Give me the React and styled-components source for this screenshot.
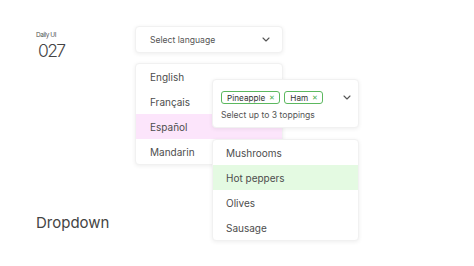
import React from "react";
import styled, { createGlobalStyle } from "styled-components";

const Global = createGlobalStyle`
  html, body { margin: 0; padding: 0; background: #ffffff; }
  body { font-family: Inter, "Noto Sans", sans-serif; -webkit-font-smoothing: antialiased; }
`;

const Page = styled.div`
  width: 474px;
  height: 266px;
  display: grid;
  grid-template-columns: 135px 1fr;
  background: #fff;
  overflow: hidden;
`;

const Aside = styled.div`
  display: flex;
  flex-direction: column;
  justify-content: space-between;
  padding: 31px 0 34px 36px;
  color: #444;
`;

const Brand = styled.div`
  display: flex;
  flex-direction: column;
  gap: 2px;
`;

const BrandSmall = styled.span`
  font-size: 6.5px;
  letter-spacing: -0.45px;
  line-height: 8px;
  color: #555;
`;

const BrandNumber = styled.span`
  font-size: 17.5px;
  font-weight: 300;
  letter-spacing: -1.6px;
  line-height: 19px;
  margin-left: 2px;
  color: #444;
`;

const Title = styled.h1`
  margin: 0;
  font-size: 15px;
  font-weight: 400;
  line-height: 18px;
  color: #444;
`;

const Stage = styled.div`
  position: relative;
`;

const Widget = styled.div`
  position: absolute;
  left: ${(p) => p.$left}px;
  top: ${(p) => p.$top}px;
  width: ${(p) => p.$width}px;
  display: flex;
  flex-direction: column;
  gap: ${(p) => p.$gap}px;
`;

const Card = styled.div`
  background: #fff;
  border: 1px solid #f1f1f1;
  border-radius: 4px;
  box-shadow: 0 1px 4px rgba(0, 0, 0, 0.07);
`;

const Trigger = styled(Card)`
  display: flex;
  align-items: ${(p) => (p.$multi ? "flex-start" : "center")};
  justify-content: space-between;
  height: ${(p) => p.$height}px;
  box-sizing: border-box;
  padding: ${(p) => (p.$multi ? "11px 7px 0 8px" : "0 12px 0 14px")};
`;

const Placeholder = styled.span`
  font-size: 8.6px;
  color: #555;
  line-height: 10px;
`;

const Menu = styled(Card)`
  display: flex;
  flex-direction: column;
  overflow: hidden;
`;

const Item = styled.div`
  height: 25px;
  display: flex;
  align-items: center;
  padding-left: ${(p) => p.$indent}px;
  font-size: 10px;
  color: #4d4d4d;
  background: ${(p) => p.$bg || "transparent"};
`;

const TagArea = styled.div`
  display: flex;
  flex-direction: column;
  gap: 6px;
`;

const Chips = styled.div`
  display: flex;
  gap: 4px;
`;

const Chip = styled.span`
  display: inline-flex;
  align-items: center;
  height: 13px;
  box-sizing: border-box;
  padding: 0 4px 0 5px;
  border: 1px solid #5cb85f;
  border-radius: 3px;
  font-size: 8.2px;
  color: #333;
`;

const ChipX = styled.span`
  margin-left: 4px;
  font-size: 7px;
  color: #4caf50;
  line-height: 1;
`;

const ChevronWrap = styled.span`
  display: inline-flex;
  margin-top: ${(p) => p.$top || 0}px;
`;

const Chevron = ({ top }) => (
  <ChevronWrap $top={top}>
    <svg width="8" height="5" viewBox="0 0 8 5" fill="none">
      <path d="M1 1l3 3 3-3" stroke="#555" strokeWidth="1.1" strokeLinecap="round" strokeLinejoin="round" />
    </svg>
  </ChevronWrap>
);

const languages = [
  { name: "English" },
  { name: "Français" },
  { name: "Español", active: true },
  { name: "Mandarin" },
];

const toppings = [
  { name: "Mushrooms" },
  { name: "Hot peppers", active: true },
  { name: "Olives" },
  { name: "Sausage" },
];

export default function App() {
  return (
    <>
      <Global />
      <Page>
        <Aside>
          <Brand>
            <BrandSmall>Daily UI</BrandSmall>
            <BrandNumber>027</BrandNumber>
          </Brand>
          <Title>Dropdown</Title>
        </Aside>
        <Stage>
          <Widget $left={0} $top={26} $width={148} $gap={10}>
            <Trigger $height={27}>
              <Placeholder>Select language</Placeholder>
              <Chevron />
            </Trigger>
            <Menu>
              {languages.map((l) => (
                <Item key={l.name} $indent={14} $bg={l.active ? "#fce5fb" : null}>
                  {l.name}
                </Item>
              ))}
            </Menu>
          </Widget>
          <Widget $left={77} $top={79} $width={147} $gap={11}>
            <Trigger $multi $height={49}>
              <TagArea>
                <Chips>
                  <Chip>
                    Pineapple<ChipX>✕</ChipX>
                  </Chip>
                  <Chip>
                    Ham<ChipX>✕</ChipX>
                  </Chip>
                </Chips>
                <Placeholder>Select up to 3 toppings</Placeholder>
              </TagArea>
              <Chevron top={4} />
            </Trigger>
            <Menu>
              {toppings.map((t) => (
                <Item key={t.name} $indent={13} $bg={t.active ? "#e4fae2" : null}>
                  {t.name}
                </Item>
              ))}
            </Menu>
          </Widget>
        </Stage>
      </Page>
    </>
  );
}
